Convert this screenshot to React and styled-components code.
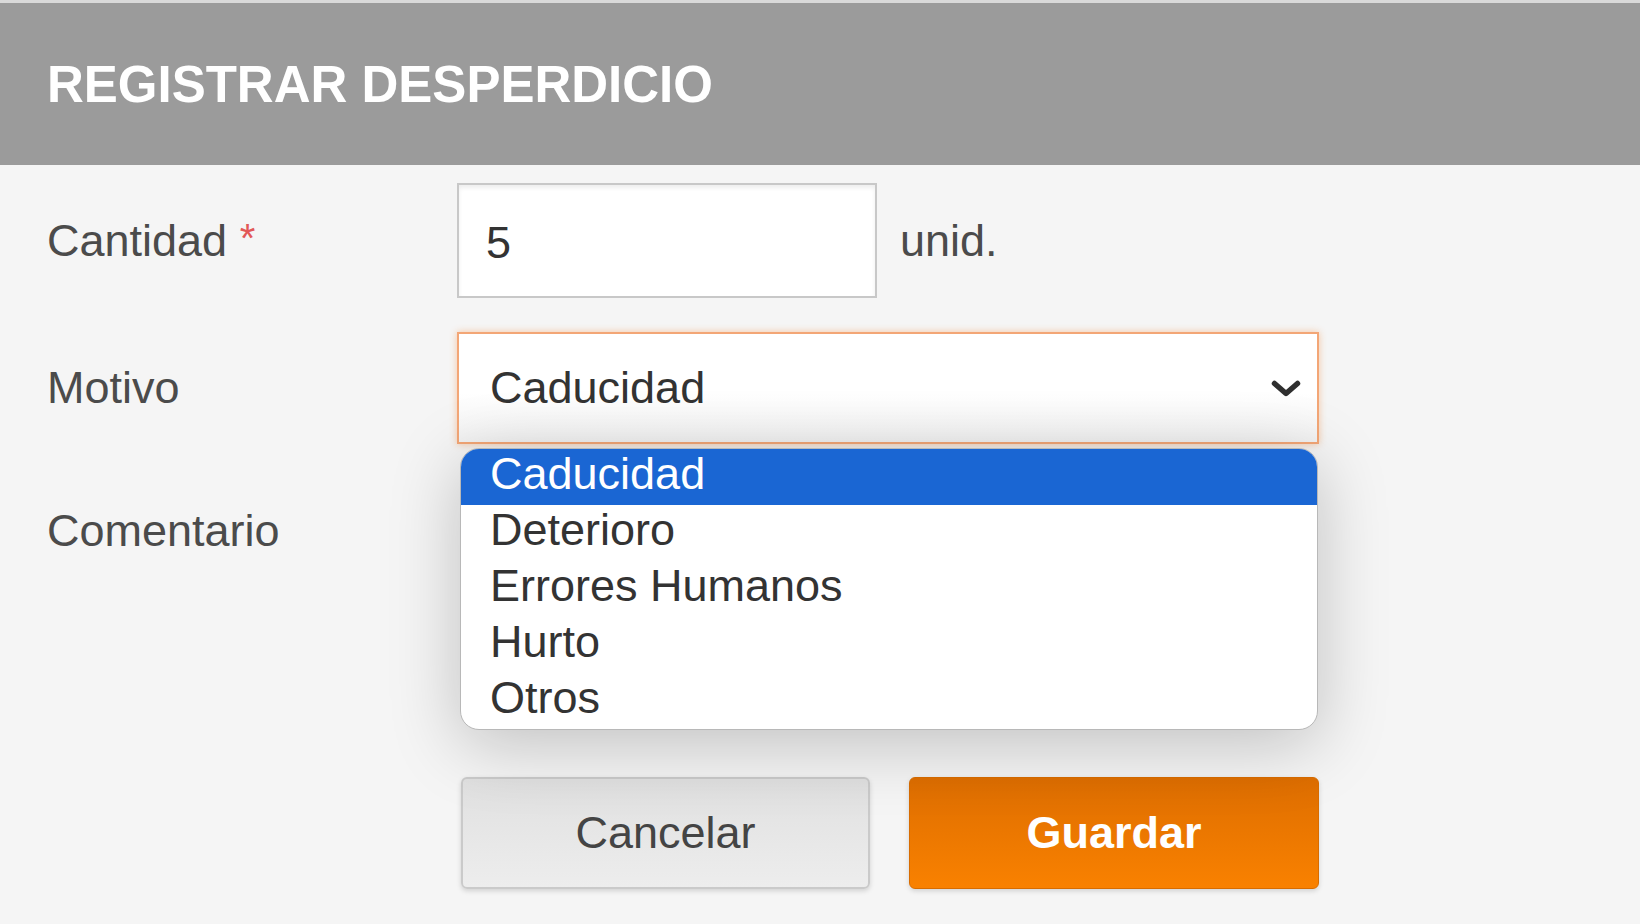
import React from 'react';
import styled, { createGlobalStyle } from 'styled-components';

const reasons = ['Caducidad', 'Deterioro', 'Errores Humanos', 'Hurto', 'Otros'];

export default function App() {
  const selected = 'Caducidad';
  return (
    <>
      <GlobalStyle />
      <Page>
        <Header>
          <Title>REGISTRAR DESPERDICIO</Title>
        </Header>
        <Form>
          <Label>
            Cantidad <Required>*</Required>
          </Label>
          <Field>
            <QtyInput defaultValue="5" />
            <Unit>unid.</Unit>
          </Field>

          <Label>Motivo</Label>
          <Field>
            <SelectBox>
              <span>{selected}</span>
              <Chevron viewBox="0 0 30 18">
                <path d="M3.5 3.5 L15 13.5 L26.5 3.5" fill="none" stroke="#2f2f2f" strokeWidth="5.5" strokeLinecap="round" strokeLinejoin="round" />
              </Chevron>
              <OptionList>
                {reasons.map((r) => (
                  <Option key={r} active={r === selected}>{r}</Option>
                ))}
              </OptionList>
            </SelectBox>
          </Field>

          <Label top>Comentario</Label>
          <CommentSlot />

          <Actions>
            <CancelButton>Cancelar</CancelButton>
            <SaveButton>Guardar</SaveButton>
          </Actions>
        </Form>
      </Page>
    </>
  );
}

const GlobalStyle = createGlobalStyle`
  body {
    margin: 0;
    background: #f5f5f5;
    font-family: "Liberation Sans", Arial, sans-serif;
  }
`;

const Page = styled.div`
  min-height: 924px;
  border-top: 3px solid #d9d9d9;
  box-sizing: border-box;
`;

const Header = styled.header`
  height: 162px;
  background: #9b9b9b;
  display: flex;
  align-items: center;
  padding-left: 47px;
`;

const Title = styled.h1`
  margin: 0;
  color: #fff;
  font-size: 51px;
  font-weight: 700;
`;

const Form = styled.div`
  display: grid;
  grid-template-columns: 410px 862px;
  row-gap: 34px;
  padding: 18px 0 0 47px;
  align-items: center;
`;

const Label = styled.div`
  font-size: 45px;
  color: #4b4b4b;
  align-self: ${(p) => (p.top ? 'start' : 'center')};
  padding-top: ${(p) => (p.top ? '27px' : '0')};
`;

const Required = styled.span`
  color: #e25858;
  font-size: 40px;
  vertical-align: 4px;
`;

const Field = styled.div`
  display: flex;
  align-items: center;
`;

const QtyInput = styled.input`
  width: 420px;
  height: 115px;
  box-sizing: border-box;
  border: 2px solid #c8c8c8;
  box-shadow: inset 0 3px 4px rgba(0, 0, 0, 0.07);
  background: #fff;
  padding: 4px 0 0 27px;
  font-family: inherit;
  font-size: 45px;
  color: #333;
  outline: none;
`;

const Unit = styled.span`
  margin-left: 23px;
  font-size: 45px;
  color: #4b4b4b;
`;

const SelectBox = styled.div`
  position: relative;
  width: 862px;
  height: 112px;
  box-sizing: border-box;
  border: 2px solid #f3a676;
  box-shadow: 0 0 7px rgba(245, 140, 60, 0.45);
  background: linear-gradient(#fff 55%, #f2f2f2);
  display: flex;
  align-items: center;
  justify-content: space-between;
  padding: 0 16px 0 31px;
  font-size: 45px;
  color: #333;
`;

const Chevron = styled.svg`
  width: 30px;
  height: 18px;
  margin-top: 2px;
`;

const OptionList = styled.ul`
  position: absolute;
  top: 114px;
  left: 1px;
  width: 856px;
  margin: 0;
  padding: 0;
  list-style: none;
  background: #fff;
  border: 1px solid #b8b8b8;
  border-radius: 19px;
  overflow: hidden;
  box-shadow: 0 14px 70px rgba(0, 0, 0, 0.22);
  z-index: 2;
`;

const Option = styled.li`
  height: 56px;
  line-height: 50px;
  padding-left: 29px;
  font-size: 45px;
  color: ${(p) => (p.active ? '#fff' : '#333')};
  background: ${(p) => (p.active ? '#1a66d3' : 'transparent')};
`;

const CommentSlot = styled.div`
  height: 265px;
`;

const Actions = styled.div`
  grid-column: 2;
  display: flex;
  gap: 39px;
  padding-left: 4px;
`;

const BaseButton = styled.button`
  height: 112px;
  box-sizing: border-box;
  font-family: inherit;
  font-size: 45px;
  border-radius: 6px;
  box-shadow: 0 2px 5px rgba(0, 0, 0, 0.15);
  cursor: pointer;
`;

const CancelButton = styled(BaseButton)`
  width: 409px;
  border: 2px solid #cacaca;
  background: linear-gradient(#e0e0e0, #ededed);
  color: #444;
`;

const SaveButton = styled(BaseButton)`
  width: 410px;
  border: 1px solid #d86c00;
  background: linear-gradient(#de6e00, #f98100);
  color: #fff;
  font-weight: 700;
`;
